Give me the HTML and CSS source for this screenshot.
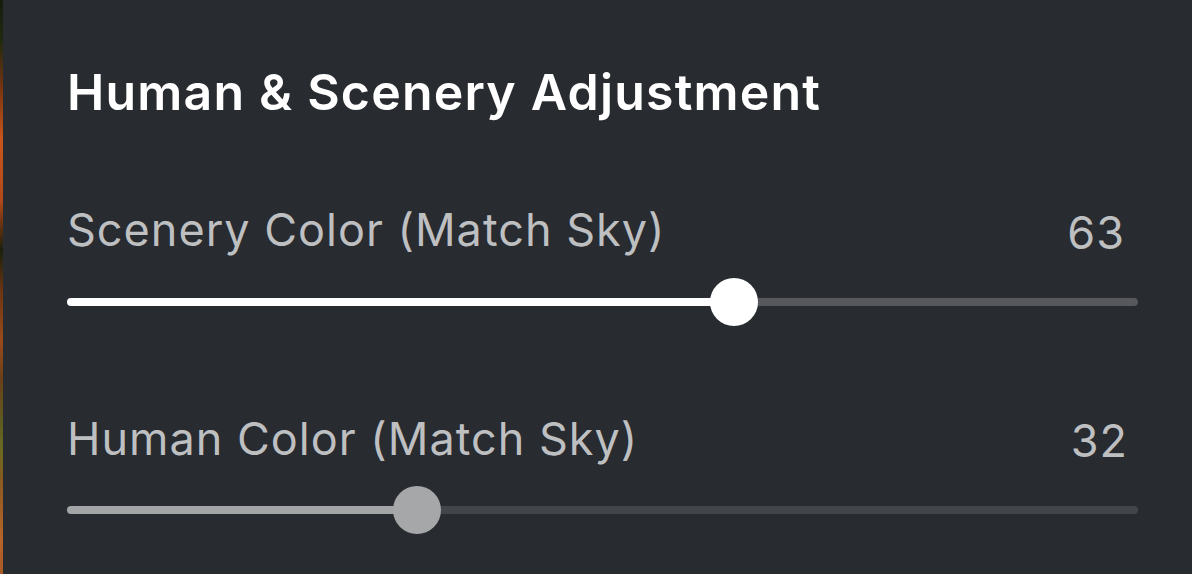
FILE: index.html
```html
<!DOCTYPE html>
<html>
<head>
<meta charset="utf-8">
<link rel="stylesheet" href="styles.css">
</head>
<body>
<div class="screen">
  <div class="edge"></div>
  <section class="panel">
    <h1 class="title">Human &amp; Scenery Adjustment</h1>
    <div class="control first">
      <div class="row">
        <span class="label">Scenery Color (Match Sky)</span>
        <span class="value">63</span>
      </div>
      <div class="slider active">
        <div class="fill" style="width: 62.3%"></div>
        <div class="thumb"></div>
        <div class="rest"></div>
      </div>
    </div>
    <div class="control second">
      <div class="row">
        <span class="label">Human Color (Match Sky)</span>
        <span class="value">32</span>
      </div>
      <div class="slider muted">
        <div class="fill" style="width: 32.7%"></div>
        <div class="thumb"></div>
        <div class="rest"></div>
      </div>
    </div>
  </section>
</div>
</body>
</html>
```

FILE: styles.css
```css
html, body {
  margin: 0;
  padding: 0;
  background: #282b2f;
}

.screen {
  display: flex;
  width: 1192px;
  height: 574px;
  overflow: hidden;
  font-family: Inter, "Liberation Sans", sans-serif;
}

.edge {
  width: 3px;
  flex: none;
  background: linear-gradient(to bottom,
    #141c0c 0px, #1f2a10 40px, #7a3510 90px, #c9561a 140px, #b2491a 200px,
    #4a2a10 235px, #1a200e 250px, #6a3512 290px, #9a4a1a 340px, #6a4018 380px,
    #5e5a20 420px, #6a6a22 450px, #8a5a20 480px, #b8642a 540px, #a85a26 574px);
}

.panel {
  flex: 1;
  padding: 0 54px 0 64px;
}

.title {
  margin: 62px 0 0 0;
  font-size: 50px;
  line-height: 60px;
  font-weight: 600;
  color: #ffffff;
  letter-spacing: 1.2px;
}

.control.first {
  margin-top: 82px;
}

.control.second {
  margin-top: 87px;
}

.row {
  display: flex;
  justify-content: space-between;
  align-items: flex-start;
  padding-right: 13px;
}

.label, .value {
  font-size: 45px;
  line-height: 52px;
  font-weight: 400;
  color: #bebfc1;
  letter-spacing: 1px;
}

.first .value {
  padding-top: 3px;
}

.second .value {
  padding-top: 2px;
  margin-right: -3px;
}

.slider {
  display: flex;
  align-items: center;
  height: 48px;
  margin-top: 19px;
}

.second .slider {
  margin-top: 19px;
}

.fill {
  height: 8px;
  border-radius: 4px 0 0 4px;
  flex: none;
}

.rest {
  flex: 1;
  height: 8px;
  border-radius: 0 4px 4px 0;
}

.thumb {
  width: 48px;
  height: 48px;
  border-radius: 50%;
  flex: none;
  margin: 0 -24px;
  position: relative;
  z-index: 1;
}

.active .fill { background: #ffffff; }
.active .thumb { background: #ffffff; }
.active .rest { background: #56585c; }

.muted .fill { background: #a3a4a6; }
.muted .thumb { background: #a6a7a9; }
.muted .rest { background: #424549; }
```
